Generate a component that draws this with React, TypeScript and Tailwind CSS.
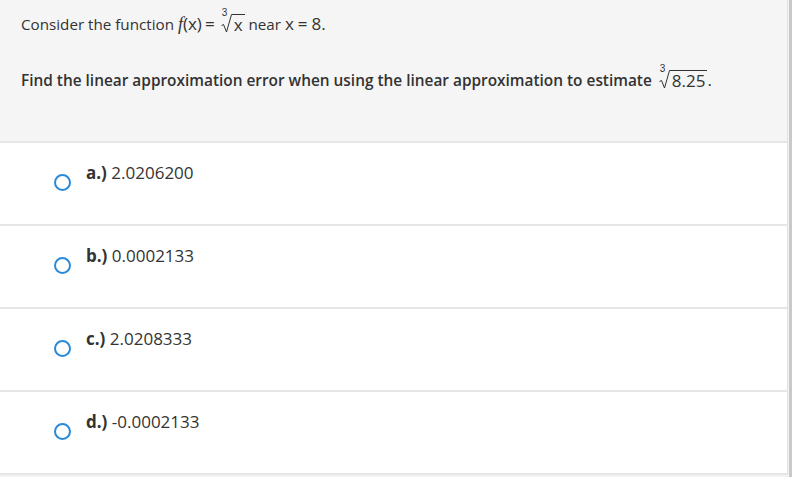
const options = [
  { label: "a.)", value: "2.0206200" },
  { label: "b.)", value: "0.0002133" },
  { label: "c.)", value: "2.0208333" },
  { label: "d.)", value: "-0.0002133" },
];

function CubeRoot({ children, color = "#333" }: { children: React.ReactNode; color?: string }) {
  return (
    <span className="relative ml-[3px] inline-flex items-stretch align-[-3px]">
      <span className="absolute -top-[6px] left-[1px] font-['Liberation_Sans',sans-serif] text-[10px] leading-none">3</span>
      <svg width="11" height="19" viewBox="0 0 11 19" className="shrink-0">
        <path d="M0.5 11.5 L2.5 10.5 L5.5 18 L10.5 0.5 L11 0.5" fill="none" stroke={color} strokeWidth="1" />
      </svg>
      <span className="border-t border-[#333] px-[2px] pt-[1px] text-[17px] leading-[17px]">{children}</span>
    </span>
  );
}

export default function App() {
  return (
    <div className="flex min-h-screen bg-[#c9c9c9] font-['Open_Sans',sans-serif] text-[#333]">
      <div className="w-[789px] bg-[#f2f2f2]">
        <div className="w-[788px] border-r border-[#e3e3e3] bg-white">
          {/* Question */}
          <div className="h-[141px] bg-[#f5f5f5] px-[21px] pt-[13px]">
            <p className="text-[15.2px] leading-[22px]">
              Consider the function{" "}
              <span className="text-[17px]">
                <i className="font-['Liberation_Serif',serif] text-[18px]">f</i>(x)<span className="mx-[3px]">=</span>
                <CubeRoot>x</CubeRoot>
              </span>{" "}
              near <span className="text-[17px]">x<span className="mx-[4px]">=</span>8.</span>
            </p>
            <p className="mt-[34px] text-[15.4px] font-semibold leading-[22px]">
              Find the linear approximation error when using the linear approximation to estimate{" "}
              <span className="font-normal">
                <CubeRoot>8.25</CubeRoot>
                <span className="text-[17px]">.</span>
              </span>
            </p>
          </div>

          {/* Options */}
          {options.map((o) => (
            <div
              key={o.label}
              className="flex h-[83px] items-start gap-[15px] border-t-2 border-[#e6e6e6] pl-[54px] pt-[18px]"
            >
              <span className="mt-[13px] h-[17px] w-[17px] rounded-full border-2 border-[#2a8ad8]" />
              <p className="text-[17px] leading-[24px]">
                <span className="font-bold">{o.label}</span> {o.value}
              </p>
            </div>
          ))}
          <div className="border-t-2 border-[#e6e6e6]" />
        </div>
      </div>
    </div>
  );
}
